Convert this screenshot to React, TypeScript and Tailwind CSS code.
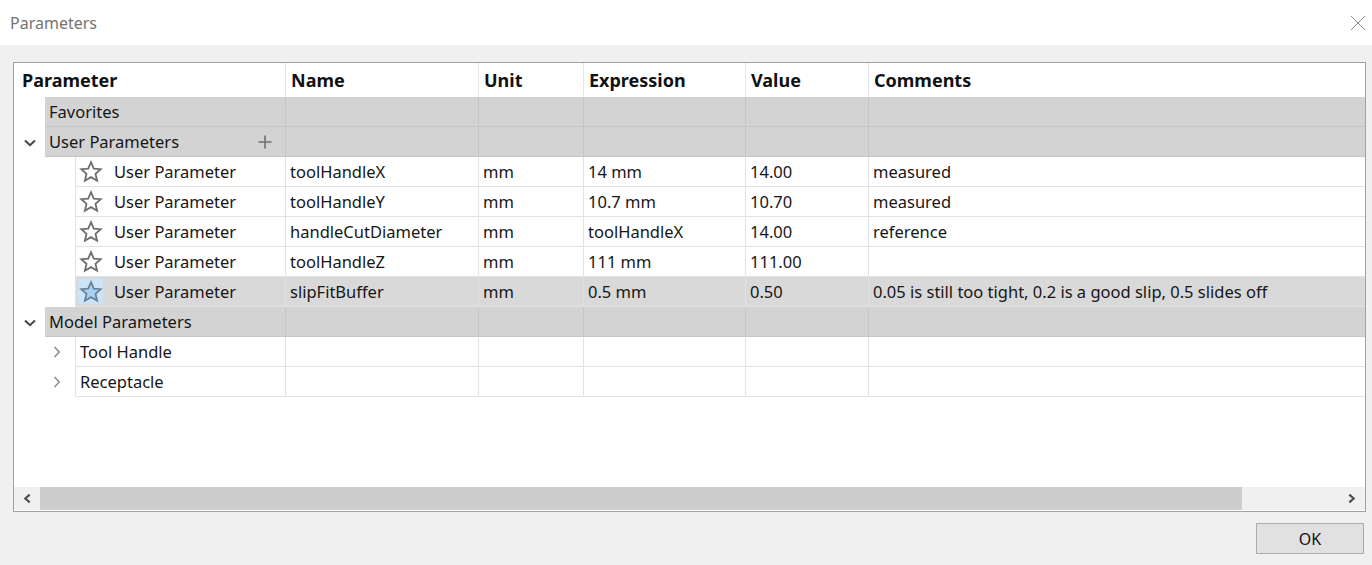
import React from "react";

const FONT = { fontFamily: '"Noto Sans", "Open Sans", "Liberation Sans", sans-serif' };

function Star({ selected }: { selected?: boolean }) {
  return (
    <div className={"w-[25px] h-[25px] flex items-center justify-center " + (selected ? "bg-[#cce4f7]" : "")}>
      <svg width="24" height="24" viewBox="0 0 24 24">
        <path
          d="M12 2.2 L14.8 8.6 L21.7 9.2 L16.5 13.8 L18.1 20.7 L12 17.1 L5.9 20.7 L7.5 13.8 L2.3 9.2 L9.2 8.6 Z"
          fill={selected ? "#a9d1f2" : "none"}
          stroke={selected ? "#6a8296" : "#6e6e6e"}
          strokeWidth="1.8"
          strokeLinejoin="miter"
        />
      </svg>
    </div>
  );
}

function ChevronDown() {
  return (
    <svg width="12" height="8" viewBox="0 0 12 8">
      <path d="M1 1.5 L6 6.2 L11 1.5" fill="none" stroke="#444" strokeWidth="2" />
    </svg>
  );
}

function ChevronRight() {
  return (
    <svg width="8" height="12" viewBox="0 0 8 12">
      <path d="M1.5 1 L6.2 6 L1.5 11" fill="none" stroke="#8a8a8a" strokeWidth="1.5" />
    </svg>
  );
}

const COLS = "grid grid-cols-[271px_193px_105px_162px_123px_1fr]";

type Row =
  | { kind: "group"; label: string; chevron: boolean; plus?: boolean }
  | { kind: "param"; name: string; unit: string; expr: string; value: string; comment: string; selected?: boolean }
  | { kind: "sub"; label: string };

const rows: Row[] = [
  { kind: "group", label: "Favorites", chevron: false },
  { kind: "group", label: "User Parameters", chevron: true, plus: true },
  { kind: "param", name: "toolHandleX", unit: "mm", expr: "14 mm", value: "14.00", comment: "measured" },
  { kind: "param", name: "toolHandleY", unit: "mm", expr: "10.7 mm", value: "10.70", comment: "measured" },
  { kind: "param", name: "handleCutDiameter", unit: "mm", expr: "toolHandleX", value: "14.00", comment: "reference" },
  { kind: "param", name: "toolHandleZ", unit: "mm", expr: "111 mm", value: "111.00", comment: "" },
  {
    kind: "param",
    name: "slipFitBuffer",
    unit: "mm",
    expr: "0.5 mm",
    value: "0.50",
    comment: "0.05 is still too tight, 0.2 is a good slip, 0.5 slides off",
    selected: true,
  },
  { kind: "group", label: "Model Parameters", chevron: true },
  { kind: "sub", label: "Tool Handle" },
  { kind: "sub", label: "Receptacle" },
];

function DataCell({ text, bg }: { text: string; bg: string }) {
  return (
    <div className={"h-[30px] border-l border-b border-[#e2e2e2] flex items-center pl-[4px] pt-[2px] whitespace-nowrap overflow-hidden " + bg}>
      {text}
    </div>
  );
}

function GroupCell() {
  return <div className="h-[30px] border-l border-b border-[#c6c6c6] bg-[#d3d3d3]" />;
}

function TableRow({ row }: { row: Row }) {
  if (row.kind === "group") {
    return (
      <div className={COLS}>
        <div className="h-[30px] flex">
          <div className="w-[31px] flex items-center justify-center pt-[1px]">{row.chevron ? <ChevronDown /> : null}</div>
          <div className="flex-1 bg-[#d3d3d3] border-b border-[#c6c6c6] flex items-center pl-[4px] pr-[13px] justify-between">
            <span className="pt-[2px]">{row.label}</span>
            {row.plus ? (
              <svg width="14" height="14" viewBox="0 0 14 14">
                <path d="M7 0.5 V13.5 M0.5 7 H13.5" stroke="#6f6f6f" strokeWidth="1.6" />
              </svg>
            ) : null}
          </div>
        </div>
        <GroupCell />
        <GroupCell />
        <GroupCell />
        <GroupCell />
        <GroupCell />
      </div>
    );
  }
  if (row.kind === "sub") {
    return (
      <div className={COLS}>
        <div className="h-[30px] flex">
          <div className="w-[61px] flex items-center justify-end pr-[14px]">
            <ChevronRight />
          </div>
          <div className="flex-1 border-l border-b border-[#e2e2e2] flex items-center pl-[4px] pt-[2px]">{row.label}</div>
        </div>
        <DataCell text="" bg="" />
        <DataCell text="" bg="" />
        <DataCell text="" bg="" />
        <DataCell text="" bg="" />
        <DataCell text="" bg="" />
      </div>
    );
  }
  const bg = row.selected ? "bg-[#d9d9d9]" : "bg-white";
  return (
    <div className={COLS}>
      <div className="h-[30px] flex">
        <div className="w-[61px]" />
        <div className={"flex-1 border-l border-b border-[#e2e2e2] flex items-center pl-[2px] gap-[11px] " + bg}>
          <Star selected={row.selected} />
          <span className="pt-[2px]">User Parameter</span>
        </div>
      </div>
      <DataCell text={row.name} bg={bg} />
      <DataCell text={row.unit} bg={bg} />
      <DataCell text={row.expr} bg={bg} />
      <DataCell text={row.value} bg={bg} />
      <DataCell text={row.comment} bg={bg} />
    </div>
  );
}

export default function App() {
  const headers = ["Parameter", "Name", "Unit", "Expression", "Value", "Comments"];
  return (
    <div className="w-[1372px] h-[565px] bg-[#f0f0f0] flex flex-col text-[#161616] text-[16.5px] overflow-hidden" style={FONT}>
      <div className="h-[45px] bg-white flex items-center justify-between pl-[10px] pr-[6px] shrink-0">
        <span className="text-[16px] text-[#747474]">Parameters</span>
        <svg width="16" height="16" viewBox="0 0 16 16">
          <path d="M1 1 L15 15 M15 1 L1 15" stroke="#8a8a8a" strokeWidth="1" />
        </svg>
      </div>
      <div className="flex flex-col pl-[13px] pr-[6px] pt-[17px]">
        <div className="w-[1353px] h-[450px] border border-[#a0a0a0] bg-white flex flex-col">
          <div className={COLS + " h-[34px]"}>
            {headers.map((h, i) => (
              <div
                key={h}
                className={
                  "flex items-center font-bold text-[18px] text-[#111] pt-[1px] " +
                  (i === 0 ? "pl-[8px]" : "pl-[5px] border-l border-[#e5e5e5]")
                }
              >
                {h}
              </div>
            ))}
          </div>
          {rows.map((r, i) => (
            <TableRow key={i} row={r} />
          ))}
          <div className="flex-1" />
          <div className="h-[23px] flex bg-[#f0f0f0] mb-[1px]">
            <div className="w-[26px] flex items-center justify-center">
              <svg width="11" height="11" viewBox="0 0 10 10">
                <path d="M7 1.5 L3 5 L7 8.5" fill="none" stroke="#505050" strokeWidth="2" />
              </svg>
            </div>
            <div className="w-[1202px] bg-[#cdcdcd]" />
            <div className="flex-1 flex items-center justify-end pr-[8px]">
              <svg width="11" height="11" viewBox="0 0 10 10">
                <path d="M3 1.5 L7 5 L3 8.5" fill="none" stroke="#505050" strokeWidth="2" />
              </svg>
            </div>
          </div>
        </div>
        <div className="flex justify-end pt-[11px] pr-[2px]">
          <button className="w-[108px] h-[31px] border border-[#adadad] bg-[#e1e1e1] text-[16px] text-[#111] flex items-center justify-center">
            OK
          </button>
        </div>
      </div>
    </div>
  );
}
